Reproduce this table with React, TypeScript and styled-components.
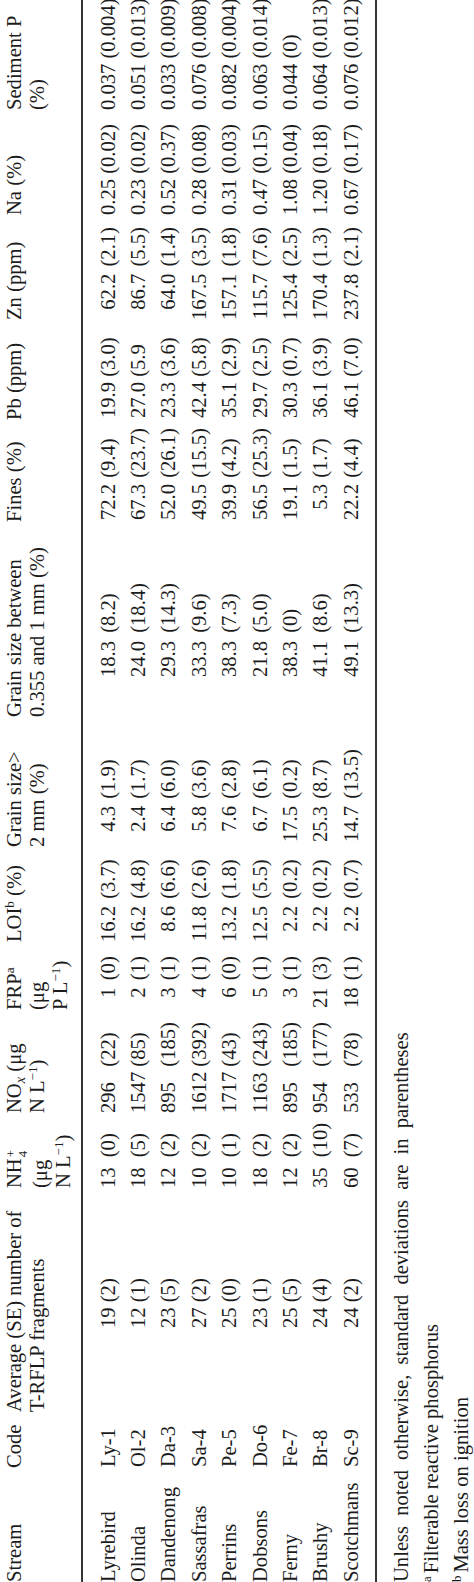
import React from 'react'
import styled, { createGlobalStyle } from 'styled-components'

const GlobalStyle = createGlobalStyle`
    html, body {
        margin: 0;
        padding: 0;
        background: #ffffff;
    }
`

// the printed table is set sideways, so it is laid out 1582 wide and turned
const Page = styled.div`
    width: 474px;
    height: 1582px;
    overflow: hidden;
`

const Sheet = styled.div`
    width: 1582px;
    height: 474px;
    transform-origin: 0 0;
    transform: translateY(1582px) rotate(-90deg);
    font-family: 'Liberation Serif', 'Times New Roman', serif;
    font-size: 20.6px;
    color: #1c1c1c;
`

type Column = {
    width: number
    indent?: number
    meanWidth?: number
    meanAlign?: 'left' | 'right'
    gap?: number
}

const columns: Column[] = [
    { width: 114 },
    { width: 56, indent: 1 },
    { width: 224, indent: 84 },
    { width: 75, gap: 5 },
    { width: 103, indent: -2, meanWidth: 2, meanAlign: 'left' },
    { width: 68, indent: 2, meanWidth: 1, gap: 2 },
    { width: 95, meanWidth: 1.75, gap: 2 },
    { width: 130, indent: 5, meanWidth: 1.75, gap: 2 },
    { width: 195, indent: 40, gap: 3 },
    { width: 102, indent: 2, meanWidth: 1.75, gap: 1 },
    { width: 100, indent: 2 },
    { width: 105, meanWidth: 2.25, gap: 2 },
    { width: 105 },
    { width: 110, indent: -3 },
]

const template = columns.map((c) => `${c.width}px`).join(' ')

const Header = styled.div`
    display: grid;
    grid-template-columns: ${template};
    height: 83px;
    padding-top: 2.5px;
    box-sizing: border-box;
    border-bottom: 2px solid #353535;
    line-height: 23px;
`

const HeadCell = styled.div`
    white-space: nowrap;
`

const Body = styled.div`
    padding: 9.6px 0 9px;
    border-bottom: 2px solid #353535;
`

const Row = styled.div`
    display: grid;
    grid-template-columns: ${template};
    height: 30.4px;
    line-height: 30.4px;
`

const Cell = styled.div<{ $indent: number }>`
    white-space: nowrap;
    padding-left: ${(p) => p.$indent}px;
`

const Mean = styled.span<{ $w?: number; $align: string; $gap: number }>`
    display: inline-block;
    text-align: ${(p) => p.$align};
    width: ${(p) => (p.$w ? `${p.$w}em` : 'auto')};
    margin-right: ${(p) => p.$gap}px;
`

const Sup = styled.span`
    font-size: 0.64em;
    vertical-align: 0.5em;
    line-height: 0;
`

const Sub = styled.span`
    font-size: 0.7em;
    vertical-align: -0.25em;
    line-height: 0;
    font-style: italic;
`

// NH4+ : the charge sits straight above the subscript
const SubSup = styled.span`
    display: inline-flex;
    flex-direction: column;
    font-size: 0.62em;
    line-height: 0.9;
    vertical-align: 0.42em;
    margin-left: 1px;
`

const Notes = styled.div`
    padding-top: 9px;
    line-height: 30px;
`

const Note = styled.div<{ $spread?: boolean }>`
    white-space: nowrap;
    word-spacing: ${(p) => (p.$spread ? '5px' : 'normal')};
`

const NoteMark = styled.span`
    font-size: 0.62em;
    vertical-align: 0.55em;
    line-height: 0;
    margin-right: 3px;
`

const headers: React.ReactNode[] = [
    <>Stream</>,
    <>Code</>,
    <>
        Average (SE) number of
        <br />
        T-RFLP fragments
    </>,
    <>
        NH
        <SubSup>
            <span>+</span>
            <span>4</span>
        </SubSup>
        <br />
        (μg
        <br />N L<Sup>−1</Sup>)
    </>,
    <>
        NO<Sub>x</Sub> (μg
        <br />N L<Sup>−1</Sup>)
    </>,
    <>
        FRP<Sup>a</Sup>
        <br />
        (μg
        <br />P L<Sup>−1</Sup>)
    </>,
    <>
        LOI<Sup>b</Sup> (%)
    </>,
    <>
        Grain size&gt;
        <br />2 mm (%)
    </>,
    <>
        Grain size between
        <br />
        0.355 and 1 mm (%)
    </>,
    <>Fines (%)</>,
    <>Pb (ppm)</>,
    <>Zn (ppm)</>,
    <>Na (%)</>,
    <>
        Sediment P
        <br />
        (%)
    </>,
]

const rows: string[][] = [
    ['Lyrebird', 'Ly-1', '19 (2)', '13 (0)', '296 (22)', '1 (0)', '16.2 (3.7)', '4.3 (1.9)', '18.3 (8.2)', '72.2 (9.4)', '19.9 (3.0)', '62.2 (2.1)', '0.25 (0.02)', '0.037 (0.004)'],
    ['Olinda', 'Ol-2', '12 (1)', '18 (5)', '1547 (85)', '2 (1)', '16.2 (4.8)', '2.4 (1.7)', '24.0 (18.4)', '67.3 (23.7)', '27.0 (5.9', '86.7 (5.5)', '0.23 (0.02)', '0.051 (0.013)'],
    ['Dandenong', 'Da-3', '23 (5)', '12 (2)', '895 (185)', '3 (1)', '8.6 (6.6)', '6.4 (6.0)', '29.3 (14.3)', '52.0 (26.1)', '23.3 (3.6)', '64.0 (1.4)', '0.52 (0.37)', '0.033 (0.009)'],
    ['Sassafras', 'Sa-4', '27 (2)', '10 (2)', '1612 (392)', '4 (1)', '11.8 (2.6)', '5.8 (3.6)', '33.3 (9.6)', '49.5 (15.5)', '42.4 (5.8)', '167.5 (3.5)', '0.28 (0.08)', '0.076 (0.008)'],
    ['Perrins', 'Pe-5', '25 (0)', '10 (1)', '1717 (43)', '6 (0)', '13.2 (1.8)', '7.6 (2.8)', '38.3 (7.3)', '39.9 (4.2)', '35.1 (2.9)', '157.1 (1.8)', '0.31 (0.03)', '0.082 (0.004)'],
    ['Dobsons', 'Do-6', '23 (1)', '18 (2)', '1163 (243)', '5 (1)', '12.5 (5.5)', '6.7 (6.1)', '21.8 (5.0)', '56.5 (25.3)', '29.7 (2.5)', '115.7 (7.6)', '0.47 (0.15)', '0.063 (0.014)'],
    ['Ferny', 'Fe-7', '25 (5)', '12 (2)', '895 (185)', '3 (1)', '2.2 (0.2)', '17.5 (0.2)', '38.3 (0)', '19.1 (1.5)', '30.3 (0.7)', '125.4 (2.5)', '1.08 (0.04)', '0.044 (0)'],
    ['Brushy', 'Br-8', '24 (4)', '35 (10)', '954 (177)', '21 (3)', '2.2 (0.2)', '25.3 (8.7)', '41.1 (8.6)', '5.3 (1.7)', '36.1 (3.9)', '170.4 (1.3)', '1.20 (0.18)', '0.064 (0.013)'],
    ['Scotchmans', 'Sc-9', '24 (2)', '60 (7)', '533 (78)', '18 (1)', '2.2 (0.7)', '14.7 (13.5)', '49.1 (13.3)', '22.2 (4.4)', '46.1 (7.0)', '237.8 (2.1)', '0.67 (0.17)', '0.076 (0.012)'],
]

// a value "mean (sd)": the mean gets its own box so the brackets line up
const Value = ({ text, col }: { text: string; col: Column }) => {
    const i = text.indexOf(' (')
    if (i < 0) return <>{text}</>
    return (
        <>
            <Mean $w={col.meanWidth} $align={col.meanAlign ?? 'right'} $gap={col.gap ?? 0}>
                {text.slice(0, i)}
            </Mean>
            {text.slice(i)}
        </>
    )
}

export default function App() {
    return (
        <Page>
            <GlobalStyle />
            <Sheet>
                <Header>
                    {headers.map((h, i) => (
                        <HeadCell key={i}>{h}</HeadCell>
                    ))}
                </Header>
                <Body>
                    {rows.map((r) => (
                        <Row key={r[1]}>
                            {r.map((v, i) => (
                                <Cell key={i} $indent={columns[i].indent ?? 0}>
                                    <Value text={v} col={columns[i]} />
                                </Cell>
                            ))}
                        </Row>
                    ))}
                </Body>
                <Notes>
                    <Note $spread>Unless noted otherwise, standard deviations are in parentheses</Note>
                    <Note>
                        <NoteMark>a</NoteMark>Filterable reactive phosphorus
                    </Note>
                    <Note>
                        <NoteMark>b</NoteMark>Mass loss on ignition
                    </Note>
                </Notes>
            </Sheet>
        </Page>
    )
}
